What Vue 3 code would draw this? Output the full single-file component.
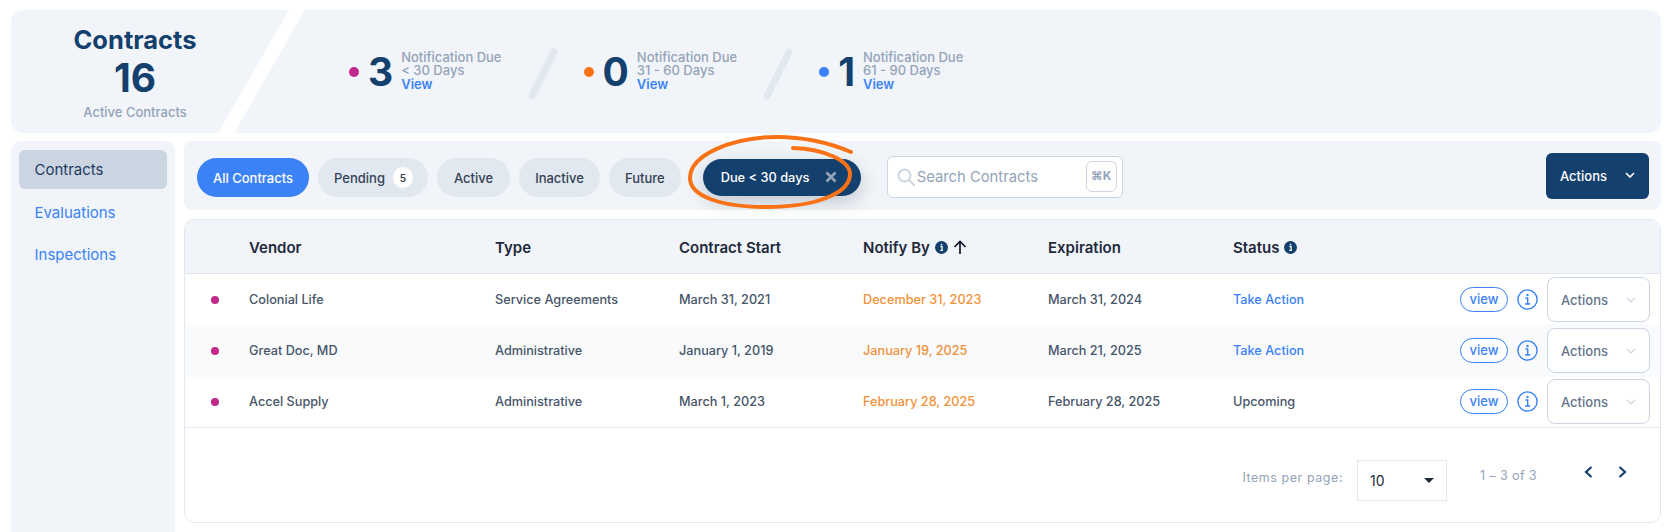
<template>
  <div class="page">
    <section class="hero">
      <div class="hero-title">
        <h1>Contracts</h1>
        <div class="hero-count">16</div>
        <div class="hero-sub">Active Contracts</div>
      </div>
      <div class="stats">
        <template v-for="(s, i) in stats" :key="s.range">
          <svg v-if="i > 0" class="slash" width="30" height="52" viewBox="0 0 30 52">
            <path d="M26 4 L4 48" stroke="#e2e8f0" stroke-width="7" stroke-linecap="round" />
          </svg>
          <div class="stat">
            <span class="stat-dot" :class="s.tone"></span>
            <span class="stat-num">{{ s.count }}</span>
            <div class="stat-text">
              <div>Notification Due</div>
              <div>{{ s.range }}</div>
              <a class="stat-link">View</a>
            </div>
          </div>
        </template>
      </div>
    </section>

    <div class="body">
      <nav class="side">
        <a v-for="item in nav" :key="item" class="side-item" :class="{ active: item === 'Contracts' }">{{ item }}</a>
      </nav>

      <main class="main">
        <div class="toolbar">
          <button class="pill primary">All Contracts</button>
          <button class="pill">Pending <span class="badge">5</span></button>
          <button class="pill wide">Active</button>
          <button class="pill">Inactive</button>
          <button class="pill">Future</button>
          <div class="due">
            <button class="due-pill">
              Due &lt; 30 days
              <svg width="12" height="12" viewBox="0 0 12 12">
                <path d="M1.5 1.5 L10.5 10.5 M10.5 1.5 L1.5 10.5" stroke="#94a3b8" stroke-width="2.6" />
              </svg>
            </button>
            <svg class="ring" width="185" height="90" viewBox="0 0 185 90" fill="none">
              <path
                d="M171 23 C145 12 118 8 97 8 C52 8 10 26 10 49 C10 67 40 78 87 78 C134 78 170 65 170 45 C170 32 145 20 113 19"
                stroke="#f97316"
                stroke-width="4"
                stroke-linecap="round"
              />
            </svg>
          </div>
          <div class="search">
            <svg width="18" height="18" viewBox="0 0 18 18" fill="none" stroke="#cbd5e1" stroke-width="1.8">
              <circle cx="7.5" cy="7.5" r="6" />
              <path d="M12 12 L17 17" stroke-linecap="round" />
            </svg>
            <span class="search-text">Search Contracts</span>
            <span class="kbd">⌘K</span>
          </div>
          <button class="actions-btn">
            Actions
            <svg width="10" height="7" viewBox="0 0 10 7" fill="none">
              <path d="M1 1 L5 5 L9 1" stroke="#fff" stroke-width="1.6" />
            </svg>
          </button>
        </div>

        <div class="table">
          <div class="grid thead">
            <span></span>
            <span>Vendor</span>
            <span>Type</span>
            <span>Contract Start</span>
            <span class="th-icons">
              Notify By
              <svg width="13" height="13" viewBox="0 0 13 13">
                <circle cx="6.5" cy="6.5" r="6.5" fill="#14406d" />
                <path d="M5.4 5.6 H7.1 V9.4 M5.2 9.4 H8" stroke="#fff" stroke-width="1.2" fill="none" />
                <circle cx="6.5" cy="3.6" r="0.9" fill="#fff" />
              </svg>
              <svg width="14" height="14" viewBox="0 0 14 14" fill="none" stroke="#111827" stroke-width="1.7">
                <path d="M7 14 V1.5 M1.5 7 L7 1.5 L12.5 7" />
              </svg>
            </span>
            <span>Expiration</span>
            <span class="th-icons">
              Status
              <svg width="13" height="13" viewBox="0 0 13 13">
                <circle cx="6.5" cy="6.5" r="6.5" fill="#14406d" />
                <path d="M5.4 5.6 H7.1 V9.4 M5.2 9.4 H8" stroke="#fff" stroke-width="1.2" fill="none" />
                <circle cx="6.5" cy="3.6" r="0.9" fill="#fff" />
              </svg>
            </span>
            <span></span>
          </div>

          <div v-for="row in rows" :key="row.vendor" class="grid row">
            <span class="row-dot"></span>
            <span>{{ row.vendor }}</span>
            <span>{{ row.type }}</span>
            <span>{{ row.start }}</span>
            <span class="notify">{{ row.notify }}</span>
            <span>{{ row.expires }}</span>
            <span :class="{ take: row.status === 'Take Action' }">{{ row.status }}</span>
            <div class="row-actions">
              <a class="view">view</a>
              <svg width="21" height="21" viewBox="0 0 21 21" fill="none" stroke="#3b82f6" stroke-width="1.4">
                <circle cx="10.5" cy="10.5" r="9.6" />
                <path d="M8.4 9 H10.7 V15 M8 15 H13.2" />
                <circle cx="10.5" cy="6" r="0.5" fill="#3b82f6" />
              </svg>
              <div class="row-select">
                Actions
                <svg width="10" height="6" viewBox="0 0 10 6" fill="none">
                  <path d="M1 1 L5 5 L9 1" stroke="#cbd5e1" stroke-width="1.2" />
                </svg>
              </div>
            </div>
          </div>

          <footer class="pager">
            <span class="per-label">Items per page:</span>
            <div class="per-select">
              10
              <svg width="10" height="5" viewBox="0 0 10 5"><path d="M0 0 H10 L5 5 Z" fill="#1e293b" /></svg>
            </div>
            <span class="range">1 – 3 of 3</span>
            <div class="arrows">
              <svg width="9" height="12" viewBox="0 0 9 12" fill="none" stroke="#14406d" stroke-width="2.2">
                <path d="M7.5 1 L2 6 L7.5 11" />
              </svg>
              <svg width="9" height="12" viewBox="0 0 9 12" fill="none" stroke="#14406d" stroke-width="2.2">
                <path d="M1.5 1 L7 6 L1.5 11" />
              </svg>
            </div>
          </footer>
        </div>
      </main>
    </div>
  </div>
</template>

<script setup>
const stats = [
  { count: 3, range: '< 30 Days', tone: 'magenta' },
  { count: 0, range: '31 - 60 Days', tone: 'orange' },
  { count: 1, range: '61 - 90 Days', tone: 'blue' }
]

const nav = ['Contracts', 'Evaluations', 'Inspections']

const rows = [
  {
    vendor: 'Colonial Life',
    type: 'Service Agreements',
    start: 'March 31, 2021',
    notify: 'December 31, 2023',
    expires: 'March 31, 2024',
    status: 'Take Action'
  },
  {
    vendor: 'Great Doc, MD',
    type: 'Administrative',
    start: 'January 1, 2019',
    notify: 'January 19, 2025',
    expires: 'March 21, 2025',
    status: 'Take Action'
  },
  {
    vendor: 'Accel Supply',
    type: 'Administrative',
    start: 'March 1, 2023',
    notify: 'February 28, 2025',
    expires: 'February 28, 2025',
    status: 'Upcoming'
  }
]
</script>

<style scoped>
.page {
  box-sizing: border-box;
  height: 532px;
  overflow: hidden;
  padding: 10px 14px 0 11px;
  font-family: Inter, "Liberation Sans", sans-serif;
  color: #475569;
  background: #fff;
}

.hero {
  position: relative;
  display: flex;
  align-items: center;
  height: 123px;
  border-radius: 12px;
  background: #f1f5f9;
}

/* white diagonal cut across the hero */
.hero::after {
  content: "";
  position: absolute;
  left: 207px;
  top: 0;
  width: 87px;
  height: 123px;
  background: #fff;
  clip-path: polygon(71px 0, 87px 0, 16px 100%, 0 100%);
}

.hero-title {
  width: 248px;
  text-align: center;
}

.hero-title h1 {
  margin: 0 0 -1px;
  font-size: 25.5px;
  line-height: 32px;
  font-weight: 700;
  color: #14406d;
}

.hero-count {
  font-size: 39px;
  line-height: 46px;
  font-weight: 700;
  color: #14406d;
}

.hero-sub {
  margin-top: 3px;
  font-size: 13px;
  line-height: 16px;
  font-weight: 500;
  color: #94a3b8;
}

.stats {
  display: flex;
  align-items: center;
  gap: 26px;
  margin-left: 90px;
}

.slash {
  margin-top: 5px;
}

.stat {
  display: flex;
  align-items: center;
}

.stat-dot {
  width: 10px;
  height: 10px;
  border-radius: 50%;
  margin-right: 9px;
}

.magenta {
  background: #c0288a;
}

.orange {
  background: #f97316;
}

.blue {
  background: #3b82f6;
}

.stat-num {
  font-size: 39px;
  line-height: 1;
  font-weight: 700;
  color: #14406d;
  margin-right: 8px;
}

.stat-text {
  margin-top: -2px;
  font-size: 13px;
  line-height: 13px;
  font-weight: 500;
  color: #94a3b8;
}

.stat-link {
  display: block;
  margin-top: 1px;
  font-weight: 600;
  color: #3b82f6;
}

.body {
  display: flex;
  gap: 9px;
  margin-top: 8px;
}

.side {
  box-sizing: border-box;
  width: 164px;
  height: 391px;
  padding: 9px 8px;
  border-radius: 10px 10px 0 0;
  background: #f1f5f9;
}

.side-item {
  display: block;
  height: 39px;
  margin-bottom: 3.7px;
  padding-left: 15.5px;
  border-radius: 6px;
  font-size: 15px;
  line-height: 40px;
  color: #3b82f6;
}

.side-item.active {
  background: #cbd5e1;
  color: #1e3a5f;
}

.main {
  flex: 1;
  min-width: 0;
}

.toolbar {
  box-sizing: border-box;
  display: flex;
  align-items: center;
  gap: 9px;
  height: 69px;
  padding: 0 12px 0 13px;
  border-radius: 8px;
  background: #f1f5f9;
}

.pill {
  display: flex;
  align-items: center;
  height: 39px;
  margin-top: 4px;
  padding: 0 16px;
  border: none;
  border-radius: 20px;
  background: #e2e8f0;
  font: 500 13px Inter, "Liberation Sans", sans-serif;
  color: #334155;
}

.pill.wide {
  padding: 0 17px;
}

.pill.primary {
  background: #3b82f6;
  color: #fff;
}

.badge {
  display: flex;
  align-items: center;
  justify-content: center;
  width: 20px;
  height: 21px;
  margin-left: 8px;
  margin-right: -1px;
  border-radius: 50%;
  background: #fff;
  font-size: 10px;
  font-weight: 600;
}

.due {
  position: relative;
  margin-left: 13px;
  margin-top: 3px;
}

.due-pill {
  display: flex;
  align-items: center;
  justify-content: space-between;
  box-sizing: border-box;
  width: 158px;
  height: 37px;
  padding: 0 24px 0 18px;
  border: none;
  border-radius: 19px;
  background: #14406d;
  box-shadow: 0 6px 18px rgba(71, 85, 105, 0.28);
  font: 500 12.8px Inter, "Liberation Sans", sans-serif;
  color: #fff;
}

.ring {
  position: absolute;
  left: -23px;
  top: -30px;
  pointer-events: none;
}

.search {
  box-sizing: border-box;
  display: flex;
  align-items: center;
  width: 236px;
  height: 42px;
  margin-left: 17px;
  margin-top: 2px;
  padding: 0 5px 0 9px;
  border: 1.5px solid #cbd5e1;
  border-radius: 6px;
  background: #fff;
}

.search-text {
  flex: 1;
  margin-left: 2px;
  font-size: 14.8px;
  color: #94a3b8;
}

.kbd {
  box-sizing: border-box;
  width: 31px;
  height: 31px;
  border: 1.5px solid #cbd5e1;
  border-radius: 6px;
  text-align: center;
  font-size: 12px;
  font-weight: 700;
  line-height: 28px;
  color: #94a3b8;
}

.actions-btn {
  display: flex;
  align-items: center;
  justify-content: space-between;
  box-sizing: border-box;
  width: 103px;
  height: 46px;
  margin-left: auto;
  padding: 0 14px;
  border: none;
  border-radius: 6px;
  background: #14406d;
  font: 500 13px Inter, "Liberation Sans", sans-serif;
  color: #fff;
}

.table {
  box-sizing: border-box;
  height: 304px;
  margin-top: 9px;
  overflow: hidden;
  border: 1px solid #e2e8f0;
  border-radius: 10px;
}

.grid {
  display: grid;
  grid-template-columns: 64px 246px 184px 184px 185px 185px 1fr auto;
  align-items: center;
  box-sizing: border-box;
}

.thead {
  height: 54px;
  padding-top: 1px;
  border-bottom: 1.5px solid #e2e8f0;
  background: #f1f5f9;
  font-size: 15px;
  font-weight: 600;
  color: #1e293b;
}

.th-icons {
  display: flex;
  align-items: center;
  gap: 5px;
}

.row {
  height: 51.3px;
  font-size: 12.7px;
  font-weight: 500;
  color: #475569;
}

.row:nth-of-type(odd) {
  background: #f8fafc;
}

.row:last-of-type {
  border-bottom: 1.5px solid #e2e8f0;
}

.row-dot {
  width: 8px;
  height: 8px;
  margin-left: 26px;
  border-radius: 50%;
  background: #c0288a;
}

.notify {
  color: #f0923a;
}

.take {
  color: #3b82f6;
}

.row-actions {
  display: flex;
  align-items: center;
  gap: 9px;
  margin-right: 10px;
}

.view {
  box-sizing: border-box;
  width: 48px;
  height: 25px;
  border: 1.4px solid #3b82f6;
  border-radius: 13px;
  background: #fff;
  text-align: center;
  font-size: 13px;
  line-height: 22px;
  color: #3b82f6;
}

.row-select {
  display: flex;
  align-items: center;
  justify-content: space-between;
  box-sizing: border-box;
  width: 103px;
  height: 45px;
  padding: 0 13px 0 13px;
  border: 1.5px solid #cbd5e1;
  border-radius: 8px;
  background: #fff;
  font-size: 13px;
  color: #64748b;
}

.pager {
  display: flex;
  align-items: center;
  justify-content: flex-end;
  height: 95px;
  padding-right: 33px;
  font-size: 12.5px;
  color: #94a3b8;
}

.per-label {
  margin-top: 4px;
  letter-spacing: 0.55px;
}

.per-select {
  box-sizing: border-box;
  display: flex;
  align-items: center;
  justify-content: space-between;
  width: 90px;
  height: 41px;
  margin: 11px 33px 0 14px;
  padding: 0 12px 0 12px;
  border: 1.5px solid #e2e8f0;
  font-size: 14px;
  color: #1e293b;
}

.range {
  letter-spacing: 0.4px;
}

.arrows {
  display: flex;
  gap: 25px;
  margin: 0 0 6px 47px;
}
</style>
